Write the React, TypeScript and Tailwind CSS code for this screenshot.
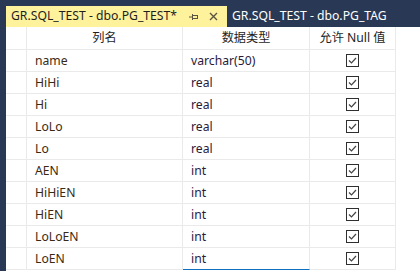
import React from "react";

interface ColumnRow {
  name: string;
  type: string;
  nullable: boolean;
}

const rows: ColumnRow[] = [
  { name: "name", type: "varchar(50)", nullable: true },
  { name: "HiHi", type: "real", nullable: true },
  { name: "Hi", type: "real", nullable: true },
  { name: "LoLo", type: "real", nullable: true },
  { name: "Lo", type: "real", nullable: true },
  { name: "AEN", type: "int", nullable: true },
  { name: "HiHiEN", type: "int", nullable: true },
  { name: "HiEN", type: "int", nullable: true },
  { name: "LoLoEN", type: "int", nullable: true },
  { name: "LoEN", type: "int", nullable: true },
];

const font = { fontFamily: '"Noto Sans", "Noto Sans CJK SC", sans-serif' };

function CheckBox({ checked }: { checked: boolean }) {
  return (
    <span className="w-[13px] h-[13px] border border-[#2f2f2f] bg-white flex items-center justify-center">
      {checked && (
        <svg width="11" height="11" viewBox="0 0 11 11">
          <polyline points="2,5.5 4.5,8 9,3" fill="none" stroke="#444444" strokeWidth="1.2" />
        </svg>
      )}
    </span>
  );
}

function PinIcon() {
  return (
    <svg width="10" height="8" viewBox="0 0 10 8" className="shrink-0">
      <line x1="0" y1="4" x2="3" y2="4" stroke="#5a5540" strokeWidth="1" />
      <line x1="3.5" y1="1" x2="3.5" y2="7" stroke="#5a5540" strokeWidth="1" />
      <rect x="3.5" y="2.5" width="5" height="3" fill="none" stroke="#5a5540" strokeWidth="1" />
    </svg>
  );
}

function CloseIcon() {
  return (
    <svg width="9" height="9" viewBox="0 0 9 9" className="shrink-0">
      <path d="M1 1 L8 8 M8 1 L1 8" stroke="#5a5540" strokeWidth="1.4" />
    </svg>
  );
}

export default function App() {
  return (
    <div className="w-[420px] h-[271px] overflow-hidden bg-[#293955] flex flex-col text-[12.2px]" style={font}>
      {/* Tab strip */}
      <div className="h-[27px] shrink-0 pt-[6px] pl-[6px] flex">
        <div className="w-[221px] h-[21px] bg-[#fff29d] flex items-center pl-[5px] text-[#1e1e1e]">
          <span className="whitespace-nowrap w-[178px]">GR.SQL_TEST - dbo.PG_TEST*</span>
          <span className="flex items-center"><PinIcon /></span>
          <span className="ml-[10px] flex items-center"><CloseIcon /></span>
        </div>
        <div className="h-[21px] flex items-center pl-[5px] text-white whitespace-nowrap">
          GR.SQL_TEST - dbo.PG_TAG
        </div>
      </div>

      {/* Table designer grid */}
      <div className="flex-1 ml-[6px] bg-white">
        <div className="grid grid-cols-[21px_156px_127px_86px_1fr]">
          <div className="h-[23px] border-r border-b border-[#eaeaea]" />
          <div className="h-[23px] pt-[1px] border-r border-b border-[#eaeaea] flex items-center justify-center text-[#1e1e1e]">列名</div>
          <div className="h-[23px] pt-[1px] border-r border-b border-[#eaeaea] flex items-center justify-center text-[#1e1e1e]">数据类型</div>
          <div className="h-[23px] pt-[1px] border-r border-b border-[#eaeaea] flex items-center justify-center text-[#1e1e1e] whitespace-nowrap">允许 Null 值</div>
          <div className="h-[23px]" />
          {rows.map((r, i) => {
            const last = i === rows.length - 1;
            return (
              <React.Fragment key={r.name}>
                <div className="h-[22px] border-r border-b border-[#eaeaea]" />
                <div className="h-[22px] pt-[1px] border-r border-b border-[#eaeaea] flex items-center pl-[8px] text-[#3b2a12]">{r.name}</div>
                <div
                  className={
                    last
                      ? "h-[22px] pt-[1px] border-r border-b border-r-[#eaeaea] border-b-[#0e70c0] flex items-center pl-[8px] text-[#2a1a3a]"
                      : "h-[22px] pt-[1px] border-r border-b border-[#eaeaea] flex items-center pl-[8px] text-[#2a1a3a]"
                  }
                >
                  {r.type}
                </div>
                <div className="h-[22px] border-r border-b border-[#eaeaea] flex items-center justify-center">
                  <CheckBox checked={r.nullable} />
                </div>
                <div className="h-[22px]" />
              </React.Fragment>
            );
          })}
        </div>
      </div>
    </div>
  );
}
